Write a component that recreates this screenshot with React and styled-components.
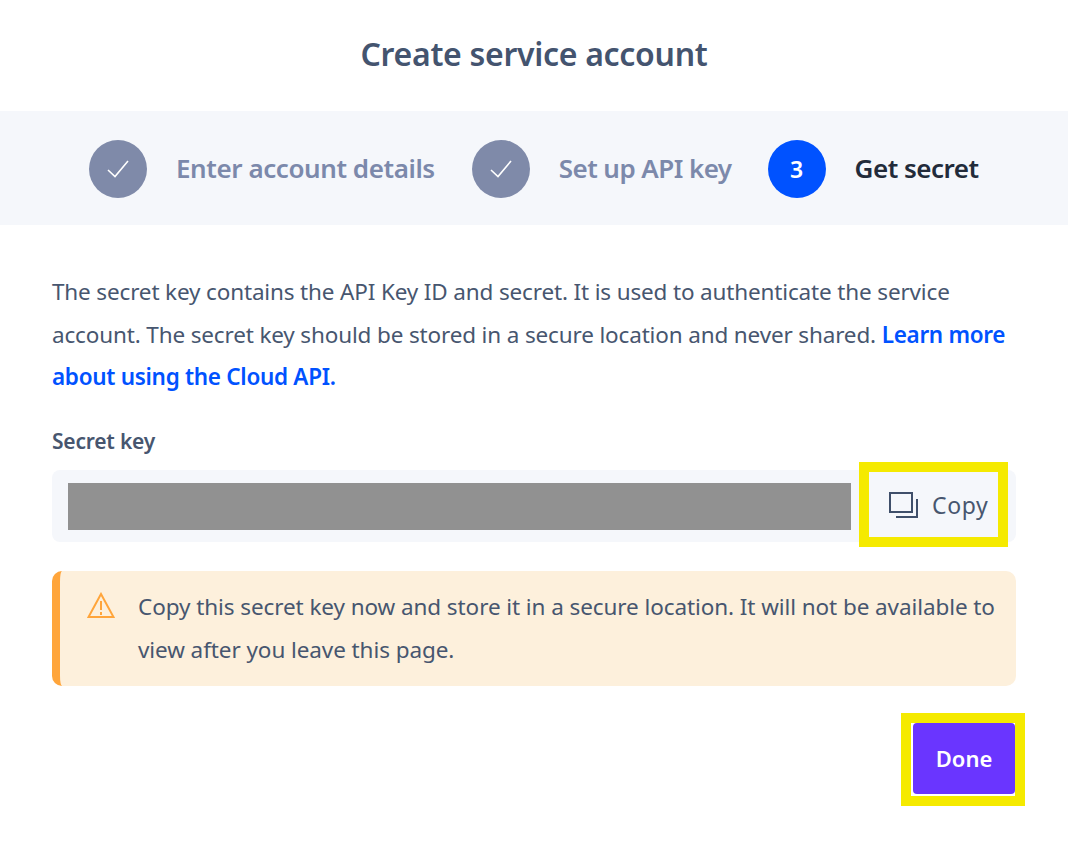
import styled, { createGlobalStyle } from "styled-components";

const GlobalStyle = createGlobalStyle`
  body {
    margin: 0;
    background-color: #ffffff;
    font-family: "Noto Sans", "Open Sans", sans-serif;
  }
`;

const Page = styled.div`
  width: 1068px;
  height: 844px;
  overflow: hidden;
`;

const Title = styled.h1`
  margin: 0;
  height: 111px;
  box-sizing: border-box;
  padding-bottom: 4px;
  display: flex;
  align-items: center;
  justify-content: center;
  color: #44546f;
  font-size: 32px;
  font-weight: 600;
  letter-spacing: -0.3px;
`;

const Stepper = styled.div`
  height: 114px;
  box-sizing: border-box;
  padding: 2px 0 0 89px;
  background-color: #f5f7fb;
  display: flex;
  align-items: center;
`;

const Step = styled.div`
  display: flex;
  align-items: center;
  gap: 29px;
  margin-right: ${(props) => props.$after}px;
`;

const StepCircle = styled.div`
  width: 58px;
  height: 58px;
  border-radius: 50%;
  background-color: ${(props) => (props.$active ? "#0052ff" : "#7f8aa9")};
  color: #ffffff;
  display: flex;
  align-items: center;
  justify-content: center;
  font-size: 23px;
  font-weight: 600;
`;

const StepLabel = styled.span`
  margin-top: -2px;
  color: ${(props) => (props.$active ? "#222b3a" : "#7c89ab")};
  font-size: 26px;
  font-weight: 600;
  letter-spacing: ${(props) => props.$spacing}px;
`;

const Body = styled.div`
  padding: 46px 52px 0;
`;

const Intro = styled.p`
  margin: 0;
  color: #47566f;
  font-size: 22.5px;
  line-height: 42.5px;
  letter-spacing: -0.15px;
`;

const MoreLink = styled.a`
  color: #0052ff;
  font-weight: 600;
  letter-spacing: -0.3px;
  text-decoration: none;
`;

const FieldLabel = styled.div`
  margin-top: 27px;
  color: #47566f;
  font-size: 21px;
  font-weight: 600;
  line-height: 30px;
  letter-spacing: -0.2px;
`;

const KeyField = styled.div`
  margin-top: 14px;
  height: 72px;
  background-color: #f5f7fb;
  border-radius: 8px;
  display: flex;
  align-items: flex-start;
  gap: 8px;
  padding: 0 8px 0 16px;
`;

const RedactedKey = styled.div`
  flex: 1;
  height: 47px;
  margin-top: 13px;
  background-color: #919191;
`;

const HighlightFrame = styled.div`
  border: 10px solid #f5ea00;
  box-sizing: border-box;
`;

const CopyFrame = styled(HighlightFrame)`
  width: 149px;
  height: 85px;
  margin-top: -8px;
  flex: none;
`;

const CopyButton = styled.button`
  width: 100%;
  height: 100%;
  padding: 2px 0 0 20px;
  border: 0;
  background: transparent;
  display: flex;
  align-items: center;
  gap: 14px;
  color: #47566f;
  font-family: inherit;
  font-size: 23px;
  letter-spacing: 0.6px;
`;

const Alert = styled.div`
  margin-top: 29px;
  height: 115px;
  box-sizing: border-box;
  background-color: #fdf0dc;
  border-left: 8px solid #ffa53b;
  border-radius: 10px;
  display: flex;
  align-items: flex-start;
  gap: 23px;
  padding: 14px 20px 0 27px;
`;

const AlertIcon = styled.svg`
  flex: none;
  margin-top: 7px;
`;

const AlertText = styled.p`
  margin: 0;
  color: #47566f;
  font-size: 22.5px;
  line-height: 43px;
  letter-spacing: -0.08px;
`;

const Footer = styled.div`
  margin-top: 27px;
  margin-right: -9px;
  display: flex;
  justify-content: flex-end;
`;

const DoneFrame = styled(HighlightFrame)`
  background-color: #ffffff;
  padding: 0 0 2px 2px;
`;

const DoneButton = styled.button`
  display: block;
  width: 102px;
  height: 71px;
  border: 0;
  border-radius: 4px;
  background-color: #6a35ff;
  color: #ffffff;
  font-family: inherit;
  font-size: 22px;
  font-weight: 600;
`;

function CheckIcon() {
  return (
    <svg width="24" height="20" viewBox="0 0 24 20" fill="none">
      <path d="M2 11l7 6.5L22 2" stroke="#ffffff" strokeWidth="1.6" />
    </svg>
  );
}

function CopyIcon() {
  return (
    <svg width="29" height="27" viewBox="0 0 29 27" fill="none" stroke="#3f4f6a" strokeWidth="2">
      <rect x="1" y="1" width="22" height="19" />
      <path d="M7 25h21V7" />
    </svg>
  );
}

export default function App() {
  return (
    <Page>
      <GlobalStyle />
      <Title>Create service account</Title>
      <Stepper>
        <Step $after={37}>
          <StepCircle>
            <CheckIcon />
          </StepCircle>
          <StepLabel $spacing={-0.42}>Enter account details</StepLabel>
        </Step>
        <Step $after={36}>
          <StepCircle>
            <CheckIcon />
          </StepCircle>
          <StepLabel $spacing={-0.55}>Set up API key</StepLabel>
        </Step>
        <Step $after={0}>
          <StepCircle $active>3</StepCircle>
          <StepLabel $active $spacing={-0.5}>Get secret</StepLabel>
        </Step>
      </Stepper>
      <Body>
        <Intro>
          The secret key contains the API Key ID and secret. It is used to authenticate the service
          account. The secret key should be stored in a secure location and never shared.{" "}
          <MoreLink href="#">Learn more about using the Cloud API.</MoreLink>
        </Intro>
        <FieldLabel>Secret key</FieldLabel>
        <KeyField>
          <RedactedKey />
          <CopyFrame>
            <CopyButton>
              <CopyIcon />
              Copy
            </CopyButton>
          </CopyFrame>
        </KeyField>
        <Alert>
          <AlertIcon width="28" height="26" viewBox="0 0 28 26" fill="none" stroke="#ffa53b" strokeWidth="2">
            <path d="M14 2L1.5 25h25z" />
            <path d="M14 9v9M14 20v3" />
          </AlertIcon>
          <AlertText>
            Copy this secret key now and store it in a secure location. It will not be available to
            view after you leave this page.
          </AlertText>
        </Alert>
        <Footer>
          <DoneFrame>
            <DoneButton>Done</DoneButton>
          </DoneFrame>
        </Footer>
      </Body>
    </Page>
  );
}
